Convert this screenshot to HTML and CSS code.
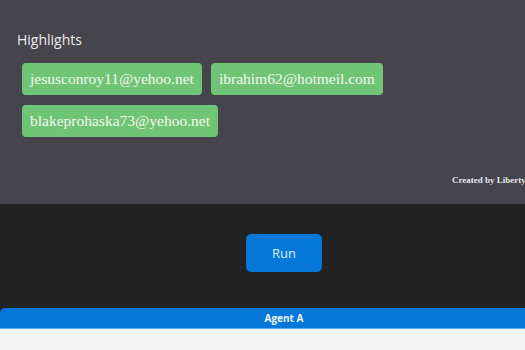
FILE: index.html
```html
<!DOCTYPE html>
<html lang="en">
<head>
    <meta charset="UTF-8">
    <title>Highlights</title>
    <link rel="stylesheet" href="styles.css">
</head>
<body>
<div class="panel">
    <h3 class="title">Highlights</h3>
    <div class="tags">
        <span class="tag">jesusconroy11@yehoo.net</span>
        <span class="tag">ibrahim62@hotmeil.com</span>
        <span class="tag">blakeprohaska73@yehoo.net</span>
    </div>
    <div class="credit">Created by Liberty</div>
</div>

<div class="runner">
    <button class="run">Run</button>
</div>

<div class="agent">Agent A</div>
<div class="bottom">
    <div class="half"></div>
    <div class="half"></div>
</div>
</body>
</html>
```

FILE: styles.css
```css
body {
    margin: 0;
    font-family: "Open Sans", sans-serif;
    background: #222222;
    overflow: hidden;
}

.panel {
    background-color: #46454b;
    height: 204px;
    box-sizing: border-box;
    padding-top: 30px;
    overflow: hidden;
}

.title {
    margin: 0 0 0 17px;
    font-size: 14px;
    font-weight: normal;
    color: #ececec;
    line-height: 20px;
}

.tags {
    display: flex;
    flex-wrap: wrap;
    gap: 10px 9px;
    margin: 13px 0 0 22px;
}

.tag {
    background-color: #70c475;
    color: #f4f8ec;
    font-family: "Liberation Serif", serif;
    font-size: 15.5px;
    height: 32px;
    line-height: 32px;
    padding: 0 8px;
    border-radius: 4px;
}

.credit {
    margin-top: 38px;
    padding-left: 452px;
    white-space: nowrap;
    font-family: "Liberation Serif", serif;
    font-weight: bold;
    font-size: 9px;
    color: #e4e4ee;
}

.runner {
    height: 104px;
    display: flex;
    justify-content: center;
    align-items: flex-start;
    padding-left: 43px;
    box-sizing: border-box;
    padding-top: 30px;
}

.run {
    width: 76px;
    height: 38px;
    border: none;
    border-radius: 5px;
    background-color: #0577d8;
    color: #dcefff;
    font-family: "Open Sans", sans-serif;
    font-size: 13px;
    cursor: pointer;
}

.agent {
    background-color: #0577d8;
    color: #eef6ff;
    height: 20px;
    line-height: 20px;
    font-size: 10px;
    font-weight: bold;
    text-align: center;
    padding-left: 43px;
    border-top-left-radius: 5px;
    border-bottom: 1px solid #5aaaf0;
}

.bottom {
    display: flex;
    height: 30px;
    background: #f4f4f4;
}

.half {
    flex: 1;
}

.half + .half {
    border-left: 1px solid #f0f0f0;
}
```
